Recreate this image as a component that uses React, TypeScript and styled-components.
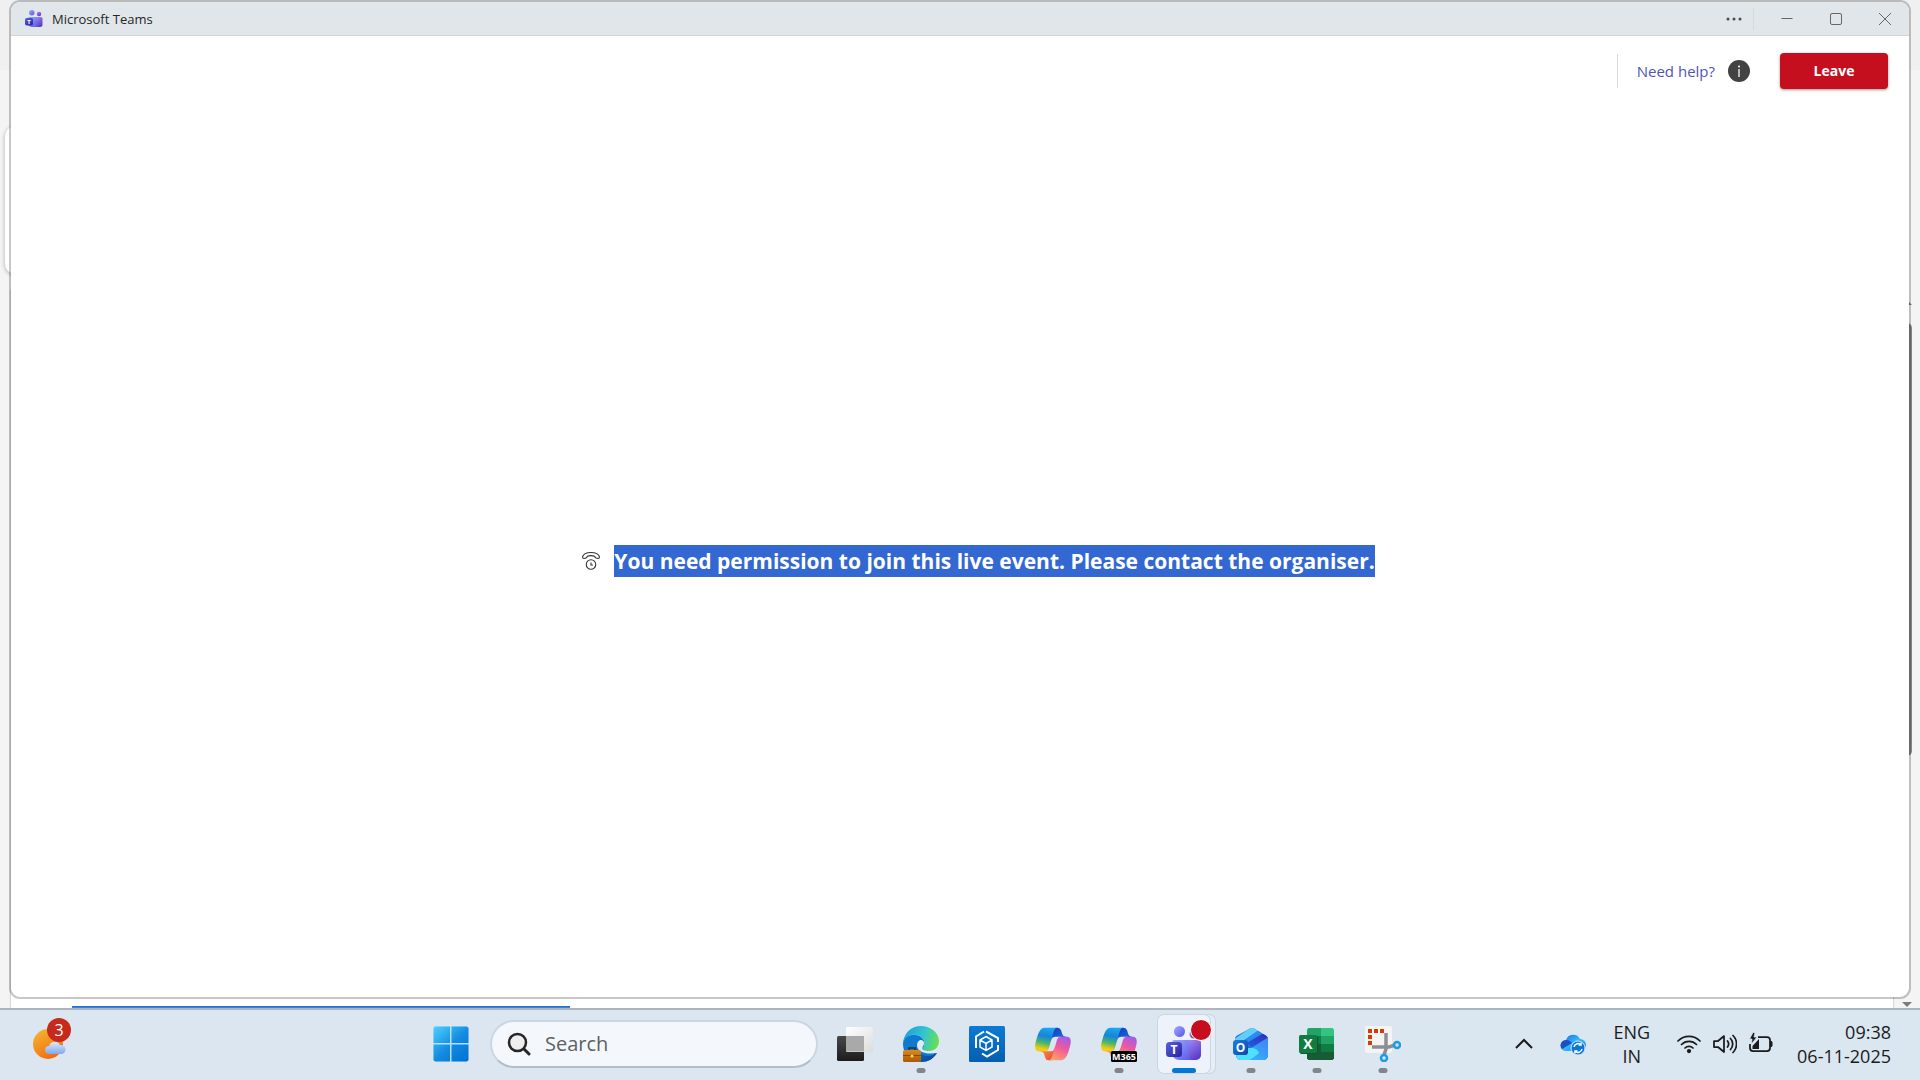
import React from "react";
import styled, { createGlobalStyle, css } from "styled-components";

const GlobalStyle = createGlobalStyle`
  *, *::before, *::after { box-sizing: border-box; }
  body { margin: 0; overflow: hidden; }
  body, button, input { font-family: "Open Sans", "Noto Sans", sans-serif; }
  button { border: 0; padding: 0; background: none; color: inherit; }
  svg { display: block; flex: none; }
`;

const Desktop = styled.div`
  display: flex;
  flex-direction: column;
  height: 100vh;
  background: #f3f3f3;
`;

const WorkArea = styled.div`
  position: relative;
  flex: 1;
  min-height: 0;
  overflow: hidden;
`;

/* The browser window that shows round the edges of the Teams window */
const BackWindow = styled.div`
  position: absolute;
  inset: 0;
  background: linear-gradient(#f0f0f0 70px, #f4f4f4 70px);
`;

const BackCard = styled.div`
  position: absolute;
  left: 5px;
  top: 126px;
  width: 80px;
  height: 148px;
  border-radius: 10px;
  background: #fff;
  box-shadow: 0 1px 4px rgba(0, 0, 0, 0.3);
`;

const BackPage = styled.div`
  position: absolute;
  inset: 290px 27px 0 11px;
  display: flex;
  align-items: flex-end;
  padding-left: 61px;
  background: #fff;
  box-shadow: 0 0 2px rgba(0, 0, 0, 0.35);
`;

const BackBanner = styled.div`
  width: 498px;
  height: 2px;
  background: linear-gradient(#1266c8, #4390e0);
`;

const BackScroll = styled.div`
  position: absolute;
  inset: 298px 7px 0 auto;
  width: 12px;
  display: flex;
  flex-direction: column;
  align-items: center;
  color: #7b7b7b;
`;

const ScrollThumb = styled.div`
  width: 10px;
  height: 433px;
  margin: 17px 0 auto;
  border-radius: 5px;
  background: #858585;
`;

const TeamsWindow = styled.section`
  position: absolute;
  inset: 0 9px 9px;
  display: flex;
  flex-direction: column;
  overflow: hidden;
  border: 2px solid rgba(0, 0, 0, 0.22);
  border-radius: 11px;
  background: #fff padding-box;
`;

const TitleBar = styled.header`
  display: flex;
  align-items: center;
  height: 34px;
  padding-left: 14px;
  border-bottom: 1px solid #d2d5d8;
  background: #e1e6ea;
`;

const WindowTitle = styled.h1`
  flex: 1;
  margin: 0 0 0 9px;
  font-size: 13px;
  line-height: 20px;
  font-weight: 400;
  color: #262626;
`;

const CaptionButton = styled.button<{ $divided?: boolean }>`
  display: grid;
  place-items: center;
  width: 49px;
  height: 32px;
  color: #666;
  ${(p) => p.$divided && css`
    width: 40px;
    height: 22px;
    margin-right: 8px;
    border-right: 1px solid #d5d9dc;
    color: #4c4c4c;
  `}
`;

const MeetingBar = styled.div`
  display: flex;
  align-items: center;
  justify-content: flex-end;
  height: 88px;
  padding: 0 21px 19px 0;
`;

const HelpLink = styled.a`
  display: flex;
  align-items: center;
  height: 34px;
  padding-left: 19px;
  border-left: 1px solid #d8d8d8;
  color: #5155b5;
  font-size: 15px;
  line-height: 20px;
  text-decoration: none;
`;

const InfoButton = styled.button`
  margin: 0 30px 0 13px;
`;

const LeaveButton = styled.button`
  width: 108px;
  height: 36px;
  border-radius: 4px;
  background: #c50f1f;
  box-shadow: 0 1px 3px rgba(0, 0, 0, 0.4);
  color: #fff;
  font-size: 14px;
  line-height: 20px;
  font-weight: 700;
`;

const Stage = styled.main`
  flex: 1;
  display: flex;
  align-items: center;
  justify-content: center;
  gap: 13px;
  padding-left: 36px;
`;

const Message = styled.p`
  margin: 0;
  background: #3367d1;
  color: #fff;
  font-size: 21px;
  line-height: 32px;
  font-weight: 700;
`;

const TaskbarRoot = styled.footer`
  display: flex;
  align-items: center;
  height: 72px;
  padding-bottom: 2px;
  border-top: 2px solid #adb5bd;
  background: linear-gradient(90deg, #dce6f1, #dae6f0);
  color: #1b1b1b;
`;

const Widgets = styled.div`
  flex: 1;
  padding-left: 31px;
`;

const WidgetButton = styled.button`
  position: relative;
  display: block;
`;

const Count = styled.span`
  position: absolute;
  left: 16px;
  top: -9px;
  width: 24px;
  height: 24px;
  border-radius: 50%;
  background: #c42b1c;
  color: #fff;
  font-size: 16px;
  line-height: 24px;
`;

const Apps = styled.nav`
  display: flex;
  align-items: center;
`;

const AppButton = styled.button<{ $active?: boolean }>`
  position: relative;
  display: grid;
  place-items: center;
  width: 56px;
  height: 58px;
  margin: 0 5px;
  border-radius: 6px;
  ${(p) => p.$active && css`
    width: 52px;
    margin: 0 8px 0 6px;
    background: #eef2fa;
    box-shadow: 0 0 0 1px #cbd6e1, 5px 0 0 #e6edf6, 5px 0 0 1px #cbd6e1;
  `}
`;

const RunMark = styled.span<{ $active?: boolean }>`
  position: absolute;
  bottom: 0;
  left: 50%;
  width: ${(p) => (p.$active ? 24 : 9)}px;
  height: 5px;
  border-radius: 3px;
  background: ${(p) => (p.$active ? "#0078d4" : "#828589")};
  transform: translateX(-50%);
`;

const Alert = styled.span`
  position: absolute;
  right: -2px;
  top: 4px;
  width: 22px;
  height: 22px;
  border: 1px solid #fff;
  border-radius: 50%;
  background: #c50f1f;
`;

const SearchBox = styled.label`
  display: flex;
  align-items: center;
  gap: 14px;
  width: 328px;
  height: 48px;
  padding: 0 15px;
  margin: 0 4px 0 6px;
  border: 2px solid #cbd6e3;
  border-bottom-color: #b3bec9;
  border-radius: 24px;
  background: #f4f8fc;
`;

const SearchInput = styled.input`
  min-width: 0;
  flex: 1;
  padding: 0;
  border: 0;
  outline: 0;
  background: none;
  font-size: 20px;
  line-height: 24px;
  &::placeholder { color: #5d6064; opacity: 1; }
`;

const Tray = styled.div`
  display: flex;
  align-items: center;
  justify-content: flex-end;
  width: 504px;
  padding-right: 29px;
`;

const TrayButton = styled.button<{ $gap?: number }>`
  display: flex;
  align-items: center;
  gap: 12px;
  margin-right: ${(p) => p.$gap ?? 0}px;
`;

const TrayText = styled.span<{ $align: "center" | "right" }>`
  font-size: 18px;
  line-height: 24px;
  text-align: ${(p) => p.$align};
  white-space: pre-line;
`;

const TeamsLogo = ({ size, id }: { size: number; id: string }) => (
  <svg width={size} height={size} viewBox="0 0 36 36" aria-hidden="true">
    <defs>
      <linearGradient id={`${id}a`} x1="0" y1="0" x2="1" y2="1">
        <stop stopColor="#a3a8ff" /><stop offset="1" stopColor="#5558e6" />
      </linearGradient>
      <linearGradient id={`${id}b`} x1="0" y1="0" x2="0.6" y2="1">
        <stop stopColor="#a58cf8" /><stop offset="1" stopColor="#5c3cc8" />
      </linearGradient>
      <linearGradient id={`${id}c`} x1="0" y1="0" x2="1" y2="1">
        <stop stopColor="#5a61dd" /><stop offset="1" stopColor="#2a219c" />
      </linearGradient>
    </defs>
    <circle cx="28" cy="8" r="4.5" fill={`url(#${id}b)`} />
    <circle cx="13.500" cy="5.500" r="5.500" fill={`url(#${id}a)`} />
    <path d="M20 14h12a3 3 0 0 1 3 3v12a5 5 0 0 1-5 5H20Z" fill={`url(#${id}b)`} />
    <path d="M8 14h12a3 3 0 0 1 3 3v11c0 3 1 5 3 6H14c-5 0-8-3-8-8V17c0-2 1-3 2-3Z" fill={`url(#${id}a)`} />
    <rect y="16" width="16" height="15" rx="3.5" fill={`url(#${id}c)`} />
    <text x="8" y="28" textAnchor="middle" fill="#fff" fontSize="12" fontWeight="700">T</text>
  </svg>
);

const CopilotLogo = ({ id, labelled }: { id: string; labelled?: boolean }) => (
  <svg width="36" height="36" viewBox="0 0 36 36" aria-hidden="true">
    <defs>
      <linearGradient id={`${id}a`} x1="0.500" y1="0" x2="0.300" y2="1">
        <stop stopColor="#1aa5f5" /><stop offset="0.350" stopColor="#1685d8" />
        <stop offset="0.650" stopColor="#4cb66b" /><stop offset="0.900" stopColor="#f2cb12" />
      </linearGradient>
      <linearGradient id={`${id}b`} x1="0.700" y1="0" x2="0.300" y2="1">
        <stop stopColor="#a55be8" /><stop offset="0.450" stopColor="#ee5a9c" /><stop offset="1" stopColor="#ff9f6a" />
      </linearGradient>
      <linearGradient id={`${id}c`} x1="0" y1="0" x2="1" y2="1">
        <stop stopColor="#0d3fb8" /><stop offset="1" stopColor="#2371ec" />
      </linearGradient>
      <linearGradient id={`${id}d`} x1="0" y1="0" x2="1" y2="1">
        <stop stopColor="#ff9a42" /><stop offset="1" stopColor="#e8463a" />
      </linearGradient>
    </defs>
    <g transform="translate(-1.500 -1.500) scale(0.810)">
      <path fill={`url(#${id}c)`} d="M34.142 7.325A4.63 4.63 0 0 0 29.7 4H28.35a4.63 4.63 0 0 0-4.554 3.794L21.48 20.407l.575-1.965a4.63 4.63 0 0 1 4.444-3.33h7.853l3.294 1.282 3.175-1.283h-.926a4.63 4.63 0 0 1-4.443-3.325l-1.31-4.461Z" />
      <path fill={`url(#${id}d)`} d="M14.33 40.656A4.63 4.63 0 0 0 18.779 44h2.87a4.63 4.63 0 0 0 4.629-4.51l.312-12.163-.654 2.233a4.63 4.63 0 0 1-4.443 3.329h-7.919l-2.823-1.532-3.057 1.532h.912a4.63 4.63 0 0 1 4.447 3.344l1.279 4.423Z" />
      <path fill={`url(#${id}a)`} d="M29.5 4H13.46c-4.583 0-7.332 6.057-9.165 12.113-2.172 7.177-5.015 16.775 3.207 16.775h6.925a4.63 4.63 0 0 0 4.456-3.358 2077.617 2077.617 0 0 1 4.971-17.156c.843-2.843 1.544-5.284 2.621-6.805C27.08 4.717 28.086 4 29.5 4Z" />
      <path fill={`url(#${id}b)`} d="M18.498 44h16.04c4.582 0 7.332-6.058 9.165-12.115 2.171-7.177 5.013-16.775-3.208-16.775h-6.926a4.63 4.63 0 0 0-4.455 3.358 2084.036 2084.036 0 0 1-4.972 17.16c-.842 2.842-1.544 5.283-2.62 6.805-.604.852-1.61 1.567-3.024 1.567Z" />
    </g>
    {labelled && (
      <>
        <rect x="10" y="25" width="26" height="11" rx="1.500" fill="#000" />
        <text x="23" y="34" textAnchor="middle" fill="#fff" fontSize="9" fontWeight="700">M365</text>
      </>
    )}
  </svg>
);

const WindowsLogo = () => (
  <svg width="36" height="36" viewBox="0 0 36 36" aria-hidden="true">
    <defs>
      <linearGradient id="win" gradientUnits="userSpaceOnUse" x1="0" y1="0" x2="32" y2="36">
        <stop stopColor="#4fd2ff" /><stop offset="0.550" stopColor="#138be0" /><stop offset="1" stopColor="#0272d2" />
      </linearGradient>
    </defs>
    <rect x="0.500" y="0.500" width="35" height="35" rx="1.500" fill="#b7defa" />
    <path fill="url(#win)" d="M2 .5h15v16.500H.5V2ZM18.500.5H34L35.500 2v15h-17ZM.5 18.500H17v17H2L.5 34ZM18.500 18.500h17V34L34 35.500H18.500Z" />
  </svg>
);

const TaskViewLogo = () => (
  <svg width="36" height="36" viewBox="0 0 36 36" aria-hidden="true">
    <defs>
      <linearGradient id="tvd" x1="0" y1="0" x2="0" y2="1"><stop stopColor="#484848" /><stop offset="1" stopColor="#1c1c1c" /></linearGradient>
      <linearGradient id="tvl" x1="0" y1="0" x2="1" y2="1"><stop stopColor="#fff" /><stop offset="1" stopColor="#dcdcdc" /></linearGradient>
    </defs>
    <rect x="0" y="10" width="27" height="25" rx="1.500" fill="url(#tvd)" />
    <rect x="9" y="1" width="27" height="25" rx="1.500" fill="url(#tvl)" />
    <path d="M9 10h18v15.500H10l-1-1Z" fill="#a9a9a9" />
  </svg>
);

const EdgeLogo = () => (
  <svg width="36" height="36" viewBox="0 0 36 36" aria-hidden="true">
    <defs>
      <linearGradient id="eda" x1="0" y1="0.400" x2="1" y2="0.600"><stop stopColor="#1f9fd8" /><stop offset="0.550" stopColor="#33c5cf" /><stop offset="1" stopColor="#6be04c" /></linearGradient>
      <linearGradient id="edb" x1="0" y1="0" x2="1" y2="1"><stop stopColor="#0c78d4" /><stop offset="1" stopColor="#123f8c" /></linearGradient>
      <linearGradient id="edc" x1="0" y1="0" x2="0" y2="1"><stop stopColor="#dc8b1a" /><stop offset="1" stopColor="#a85a08" /></linearGradient>
    </defs>
    <path d="M0 18C0 11 7 8 13 9c7 1 10 7 8 11-2 5 3 7 12 7-3 6-8 9-15 9C8 36 0 28 0 18Z" fill="#0f78d0" />
    <path d="M14 17c-2 8 4 13 11 13 4 0 7-2 8-3 1 0 1 0 .5 1C30 33 25 36 18 36c-6-3-9-13-4-19Z" fill="url(#edb)" />
    <path d="M0 17C1 7 8 0 18 0c10 0 18 7 18 15 0 6-4 10-10 10-5 0-7-2-5-5 2-4-1-10-8-11C7 8 2 11 0 17Z" fill="url(#eda)" />
    <path d="M14 20c0-4 2-6 4-6 3 0 4 4 2 6-1 2-1 4 3 5 3 1 7 0 10-2l1 3c-5 3-19 2-20-6Z" fill="#dfeaf5" />
    <path d="M6 24v-2h6v2" fill="none" stroke="#3c2b18" strokeWidth="1.500" />
    <rect y="24" width="18" height="12" rx="1.500" fill="url(#edc)" />
    <path d="M0 29h18v1H0Z" fill="#8e4904" /><circle cx="9" cy="30" r="1.500" fill="#ffd34d" />
  </svg>
);

const CubeLogo = () => (
  <svg width="36" height="36" viewBox="0 0 36 36" aria-hidden="true">
    <defs><linearGradient id="cub" x1="0" y1="0" x2="0" y2="1"><stop stopColor="#0a7ad6" /><stop offset="1" stopColor="#065eb0" /></linearGradient></defs>
    <rect width="36" height="36" rx="1.500" fill="url(#cub)" />
    <g fill="none" stroke="#fff" strokeWidth="2">
      <path d="M15 5.500 7 10.500V22M17 5.500l12 6.500v4M29 19v5l-11 6.500-5-3" />
      <path d="m17 10.500 6 3.500v7l-6 3.500-6-3.500v-7ZM11 14l6 3.500 6-3.500M17 17.500v7" strokeWidth="1.500" />
    </g>
  </svg>
);

const OutlookLogo = () => (
  <svg width="36" height="36" viewBox="0 0 36 36" aria-hidden="true">
    <defs>
      <linearGradient id="ola" x1="0" y1="1" x2="1" y2="0"><stop stopColor="#1450cf" /><stop offset="1" stopColor="#2f9bf5" /></linearGradient>
      <linearGradient id="olb" x1="1" y1="0" x2="0.300" y2="1"><stop stopColor="#3f7ff0" /><stop offset="1" stopColor="#36b4fb" /></linearGradient>
      <linearGradient id="olc" x1="0" y1="0" x2="1" y2="1"><stop stopColor="#1b83dd" /><stop offset="1" stopColor="#0c43a9" /></linearGradient>
      <linearGradient id="old" x1="0" y1="1" x2="1" y2="0"><stop stopColor="#1d63e0" /><stop offset="1" stopColor="#3629b5" /></linearGradient>
      <clipPath id="olm"><path d="M2 13c0-2 1-3 3-4L16 3c2-1.500 4-1.500 6 0l10 6c2 1 3 2 3 4v16c0 3-2 5-5 5H9c-4 0-6-2-6-6Z" /></clipPath>
    </defs>
    <g clipPath="url(#olm)">
      <path d="M0 0h36v36H0Z" fill="url(#ola)" />
      <path d="M0 14 20 0l6 4L7 17Z" fill="#62cdfb" />
      <path d="m6 18 20-14 3 2-19 14Z" fill="#2c8bf0" />
      <path d="M14 17 31 7l5 6-16 9Z" fill="url(#old)" />
      <path d="m18 22 18-11v25H12Z" fill="url(#olb)" />
      <path d="M2 22h16c4 0 7 2 8 5-4 4-8 6-13 9H0Z" fill="#4ee0ff" />
    </g>
    <rect y="14" width="15" height="15" rx="3" fill="url(#olc)" />
    <text x="7.500" y="26" textAnchor="middle" fill="#fff" fontSize="12" fontWeight="700">O</text>
  </svg>
);

const ExcelLogo = () => (
  <svg width="36" height="36" viewBox="0 0 36 36" aria-hidden="true">
    <path d="M9.500 2H22v8H8V3.500Z" fill="#21a366" /><path d="M22 2h11.500L35 3.500V10H22Z" fill="#33c481" />
    <path d="M8 10h14v8H8Z" fill="#107c41" /><path d="M22 10h13v8H22Z" fill="#21a366" />
    <path d="M8 18h27v14.500L33.500 34h-24L8 32.500Z" fill="#185c37" /><path d="M22 18h13v8H22Z" fill="#107c41" />
    <rect x="1" y="10" width="18" height="18" rx="1.500" fill="#0b5b2e" />
    <rect y="9" width="18" height="18" rx="1.500" fill="#117b42" />
    <text x="9" y="23" textAnchor="middle" fill="#fff" fontSize="14" fontWeight="700">X</text>
  </svg>
);

const SnipLogo = () => (
  <svg width="36" height="36" viewBox="0 0 36 36" aria-hidden="true">
    <rect width="27" height="27" rx="2" fill="#f4f4f4" />
    <path d="M5 19V5h15" fill="none" stroke="#d83b01" strokeWidth="4" strokeDasharray="4 2" />
    <path d="M21 7v16l-2 6M7 21h17l6-2" fill="none" stroke="#8b8f94" strokeWidth="3.500" />
    <g fill="none" stroke="#1b9de2" strokeWidth="2.500"><circle cx="32" cy="19" r="3" /><circle cx="19" cy="32" r="3" /></g>
  </svg>
);

const WeatherLogo = () => (
  <svg width="36" height="34" viewBox="0 0 36 34" aria-hidden="true">
    <defs>
      <linearGradient id="sun" x1="0" y1="0" x2="0.600" y2="1"><stop stopColor="#f2bd35" /><stop offset="1" stopColor="#f56b0c" /></linearGradient>
      <linearGradient id="cld" x1="0" y1="0" x2="0" y2="1"><stop stopColor="#d7e9ff" /><stop offset="1" stopColor="#82a9ea" /></linearGradient>
    </defs>
    <circle cx="17" cy="17" r="15" fill="url(#sun)" />
    <path d="M18 27a4 4 0 0 1 0-8 6 6 0 0 1 11-1 4.500 4.500 0 0 1 2 9Z" fill="url(#cld)" />
  </svg>
);

const apps = [
  { name: "Task View", logo: <TaskViewLogo /> },
  { name: "Microsoft Edge", logo: <EdgeLogo />, running: true },
  { name: "Company Portal", logo: <CubeLogo /> },
  { name: "Copilot", logo: <CopilotLogo id="cop" /> },
  { name: "Microsoft 365 Copilot", logo: <CopilotLogo id="m365" labelled />, running: true },
  { name: "Microsoft Teams", logo: <TeamsLogo size={36} id="tbt" />, running: true, active: true },
  { name: "Outlook", logo: <OutlookLogo />, running: true },
  { name: "Excel", logo: <ExcelLogo />, running: true },
  { name: "Snipping Tool", logo: <SnipLogo />, running: true },
];

const Taskbar = () => (
  <TaskbarRoot>
    <Widgets>
      <WidgetButton aria-label="Weather"><WeatherLogo /><Count>3</Count></WidgetButton>
    </Widgets>
    <Apps aria-label="Apps">
      <AppButton aria-label="Start"><WindowsLogo /></AppButton>
      <SearchBox>
        <svg width="24" height="24" viewBox="0 0 24 24" fill="#eee" stroke="#262626" strokeWidth="2.500" strokeLinecap="round" aria-hidden="true">
          <circle cx="10.500" cy="10.500" r="8.500" /><path d="m17 17 5 5" strokeWidth="3" />
        </svg>
        <SearchInput type="search" placeholder="Search" aria-label="Search" />
      </SearchBox>
      {apps.map((app) => (
        <AppButton key={app.name} aria-label={app.name} $active={app.active}>
          {app.logo}
          {app.active && <Alert />}
          {app.running && <RunMark $active={app.active} />}
        </AppButton>
      ))}
    </Apps>
    <Tray>
      <TrayButton $gap={27} aria-label="Hidden icons">
        <svg width="18" height="12" viewBox="0 0 18 12" fill="none" stroke="currentColor" strokeWidth="2" aria-hidden="true"><path d="m1 10 8-8 8 8" /></svg>
      </TrayButton>
      <TrayButton $gap={27} aria-label="OneDrive">
        <svg width="26" height="24" viewBox="0 0 26 24" aria-hidden="true">
          <defs><linearGradient id="odr" x1="0" y1="0" x2="1" y2="1"><stop stopColor="#1a62d8" /><stop offset="0.500" stopColor="#2fb8fb" /><stop offset="1" stopColor="#1689ec" /></linearGradient></defs>
          <path d="M6 19a5.500 5.500 0 0 1 0-11A7.500 7.500 0 0 1 20 7a6 6 0 0 1 0 12Z" fill="url(#odr)" />
          <path d="M2 17a5.500 5.500 0 0 1 5-9c2 0 4 2 5 3Z" fill="#1c4fc4" />
          <circle cx="18" cy="16" r="7" fill="#0d78d4" stroke="#dae6f0" />
          <path d="M14 15a4 4 0 0 1 7-2M21 10.500V13h-2.500M22 17a4 4 0 0 1-7 2M15 21.500V19h2.500" fill="none" stroke="#fff" strokeWidth="1.500" />
        </svg>
      </TrayButton>
      <TrayButton $gap={27} aria-label="Input language: English, India">
        <TrayText $align="center">{"ENG\nIN"}</TrayText>
      </TrayButton>
      <TrayButton $gap={24} aria-label="Network, volume and battery">
        <svg width="24" height="24" viewBox="0 0 24 24" fill="none" stroke="currentColor" strokeWidth="1.750" strokeLinecap="round" aria-hidden="true">
          <path d="M1 9a15.500 15.500 0 0 1 22 0M4.500 12.500a10.600 10.600 0 0 1 15 0M8 16a5.700 5.700 0 0 1 8 0" /><circle cx="12" cy="19" r="1.250" fill="currentColor" />
        </svg>
        <svg width="24" height="24" viewBox="0 0 24 24" fill="none" stroke="currentColor" strokeWidth="1.750" strokeLinecap="round" strokeLinejoin="round" aria-hidden="true">
          <path d="M1 9v6h4l6 5V4L5 9ZM14.500 9a5 5 0 0 1 0 6M17.500 6.500a8 8 0 0 1 0 11M20 3.500a12 12 0 0 1 0 17" />
        </svg>
        <svg width="24" height="24" viewBox="0 0 24 24" fill="none" stroke="currentColor" strokeWidth="1.750" aria-hidden="true">
          <path d="M9 5h9a3 3 0 0 1 3 3v8a3 3 0 0 1-3 3H4a3 3 0 0 1-3-3v-4" /><path d="M21 9h1.500l1 1v4l-1 1H21Z" fill="currentColor" stroke="none" />
          <path d="M3.500 17v-3L10 7v10Z" fill="currentColor" stroke="none" /><path d="M4 .5.500 7H3l-.5 5L8 5H5l1-4.500Z" fill="currentColor" stroke="#dae6f0" strokeWidth="0.750" />
        </svg>
      </TrayButton>
      <TrayButton aria-label="Clock, 09:38, 06-11-2025">
        <TrayText $align="right">{"09:38\n06-11-2025"}</TrayText>
      </TrayButton>
    </Tray>
  </TaskbarRoot>
);

export default function App() {
  return (
    <>
      <GlobalStyle />
      <Desktop>
        <WorkArea>
          <BackWindow>
            <BackPage><BackBanner /></BackPage>
            <BackCard />
            <BackScroll>
              <svg width="12" height="8" viewBox="0 0 12 8" aria-hidden="true"><path d="m1 7 5-5 5 5Z" fill="currentColor" /></svg>
              <ScrollThumb />
              <svg width="12" height="8" viewBox="0 0 12 8" aria-hidden="true"><path d="m1 2 5 5 5-5Z" fill="currentColor" /></svg>
            </BackScroll>
          </BackWindow>
          <TeamsWindow>
            <TitleBar>
              <TeamsLogo size={18} id="ttl" />
              <WindowTitle>Microsoft Teams</WindowTitle>
              <CaptionButton $divided aria-label="More options">
                <svg width="16" height="4" viewBox="0 0 16 4" fill="currentColor" aria-hidden="true"><circle cx="2" cy="2" r="1.500" /><circle cx="8" cy="2" r="1.500" /><circle cx="14" cy="2" r="1.500" /></svg>
              </CaptionButton>
              <CaptionButton aria-label="Minimise">
                <svg width="12" height="12" viewBox="0 0 12 12" stroke="currentColor" aria-hidden="true"><path d="M.5 5.500h11" /></svg>
              </CaptionButton>
              <CaptionButton aria-label="Maximise">
                <svg width="12" height="12" viewBox="0 0 12 12" fill="none" stroke="currentColor" aria-hidden="true"><rect x="0.500" y="0.500" width="11" height="11" rx="1.500" /></svg>
              </CaptionButton>
              <CaptionButton aria-label="Close">
                <svg width="12" height="12" viewBox="0 0 12 12" stroke="currentColor" aria-hidden="true"><path d="m0 0 12 12M12 0 0 12" /></svg>
              </CaptionButton>
            </TitleBar>
            <MeetingBar>
              <HelpLink href="#help">Need help?</HelpLink>
              <InfoButton aria-label="Information">
                <svg width="22" height="22" viewBox="0 0 22 22" aria-hidden="true"><circle cx="11" cy="11" r="11" fill="#424242" /><circle cx="11" cy="6.500" r="1" fill="#fff" /><path d="M11 9v8" stroke="#fff" strokeWidth="1.250" /></svg>
              </InfoButton>
              <LeaveButton>Leave</LeaveButton>
            </MeetingBar>
            <Stage>
              <svg width="20" height="20" viewBox="0 0 20 20" fill="none" stroke="#333" strokeWidth="1.100" strokeLinejoin="round" aria-hidden="true">
                <path d="M1.500 6C2.500 2.500 6 1.500 10 1.500S17.500 2.500 18.500 6c0 1-.5 1.500-1.500 1.500l-2-.5c-1-.2-1.200-.7-1.200-1.800C11.500 4.500 8.500 4.500 6.200 5.200 6.200 6.300 6 6.800 5 7L3 7.500C2 7.500 1.500 7 1.500 6Z" />
                <circle cx="10" cy="13.500" r="4.750" /><path d="M10 11.500V14h2" />
              </svg>
              <Message>You need permission to join this live event. Please contact the organiser.</Message>
            </Stage>
          </TeamsWindow>
        </WorkArea>
        <Taskbar />
      </Desktop>
    </>
  );
}
